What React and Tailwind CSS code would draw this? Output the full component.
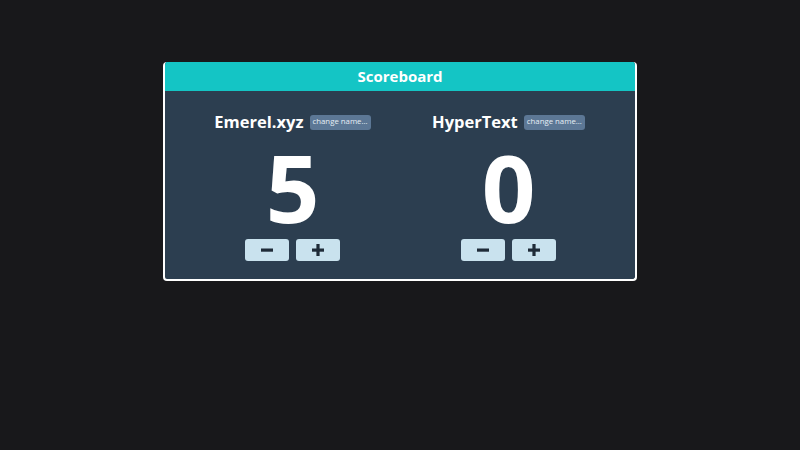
import React, { useState } from 'react';

function PlayerPanel({ name, score, onChange }) {
    return (
        <div className="w-[200px] flex flex-col items-center">
            <div className="flex items-center gap-[6px] h-[22px]">
                <span className="text-[16.5px] font-bold text-white leading-tight">{name}</span>
                <button className="h-[15px] px-[3px] rounded-[3px] bg-[#5c7795] text-[#e6eef5] text-[7.8px] leading-tight">
                    change name...
                </button>
            </div>
            <div className="mt-[4px] h-[100px] flex items-center text-[94px] font-bold text-white leading-none">
                {score}
            </div>
            <div className="flex gap-[7px] mt-[2px]">
                <button
                    onClick={() => onChange(-1)}
                    className="w-[44px] h-[22px] rounded-[3px] bg-[#c9e2ee] flex items-center justify-center"
                >
                    <svg width="14" height="14" viewBox="0 0 14 14">
                        <rect x="1" y="5.5" width="12" height="3.2" fill="#1f2b38" />
                    </svg>
                </button>
                <button
                    onClick={() => onChange(1)}
                    className="w-[44px] h-[22px] rounded-[3px] bg-[#c9e2ee] flex items-center justify-center"
                >
                    <svg width="14" height="14" viewBox="0 0 14 14">
                        <rect x="1" y="5.5" width="12" height="3.2" fill="#1f2b38" />
                        <rect x="5.4" y="1" width="3.2" height="12" fill="#1f2b38" />
                    </svg>
                </button>
            </div>
        </div>
    );
}

export default function App() {
    const [scores, setScores] = useState([5, 0]);
    const names = ['Emerel.xyz', 'HyperText'];

    const bump = (i, d) =>
        setScores(s => s.map((v, idx) => (idx === i ? Math.max(0, v + d) : v)));

    return (
        <div
            className="w-[800px] h-[450px] bg-[#18181b] pt-[62px]"
            style={{ fontFamily: '"Open Sans", "Noto Sans", sans-serif' }}
        >
            <div className="mx-auto w-[474px] rounded-[4px] overflow-hidden border-x-2 border-b-2 border-white bg-[#2c3e50]">
                <div className="h-[29px] bg-[#14c5c5] flex items-center justify-center text-white font-bold text-[15px]">
                    Scoreboard
                </div>
                <div className="flex justify-center gap-[16px] pt-[20px] pb-[18px] pl-[1px]">
                    {names.map((n, i) => (
                        <PlayerPanel key={n} name={n} score={scores[i]} onChange={d => bump(i, d)} />
                    ))}
                </div>
            </div>
        </div>
    );
}
